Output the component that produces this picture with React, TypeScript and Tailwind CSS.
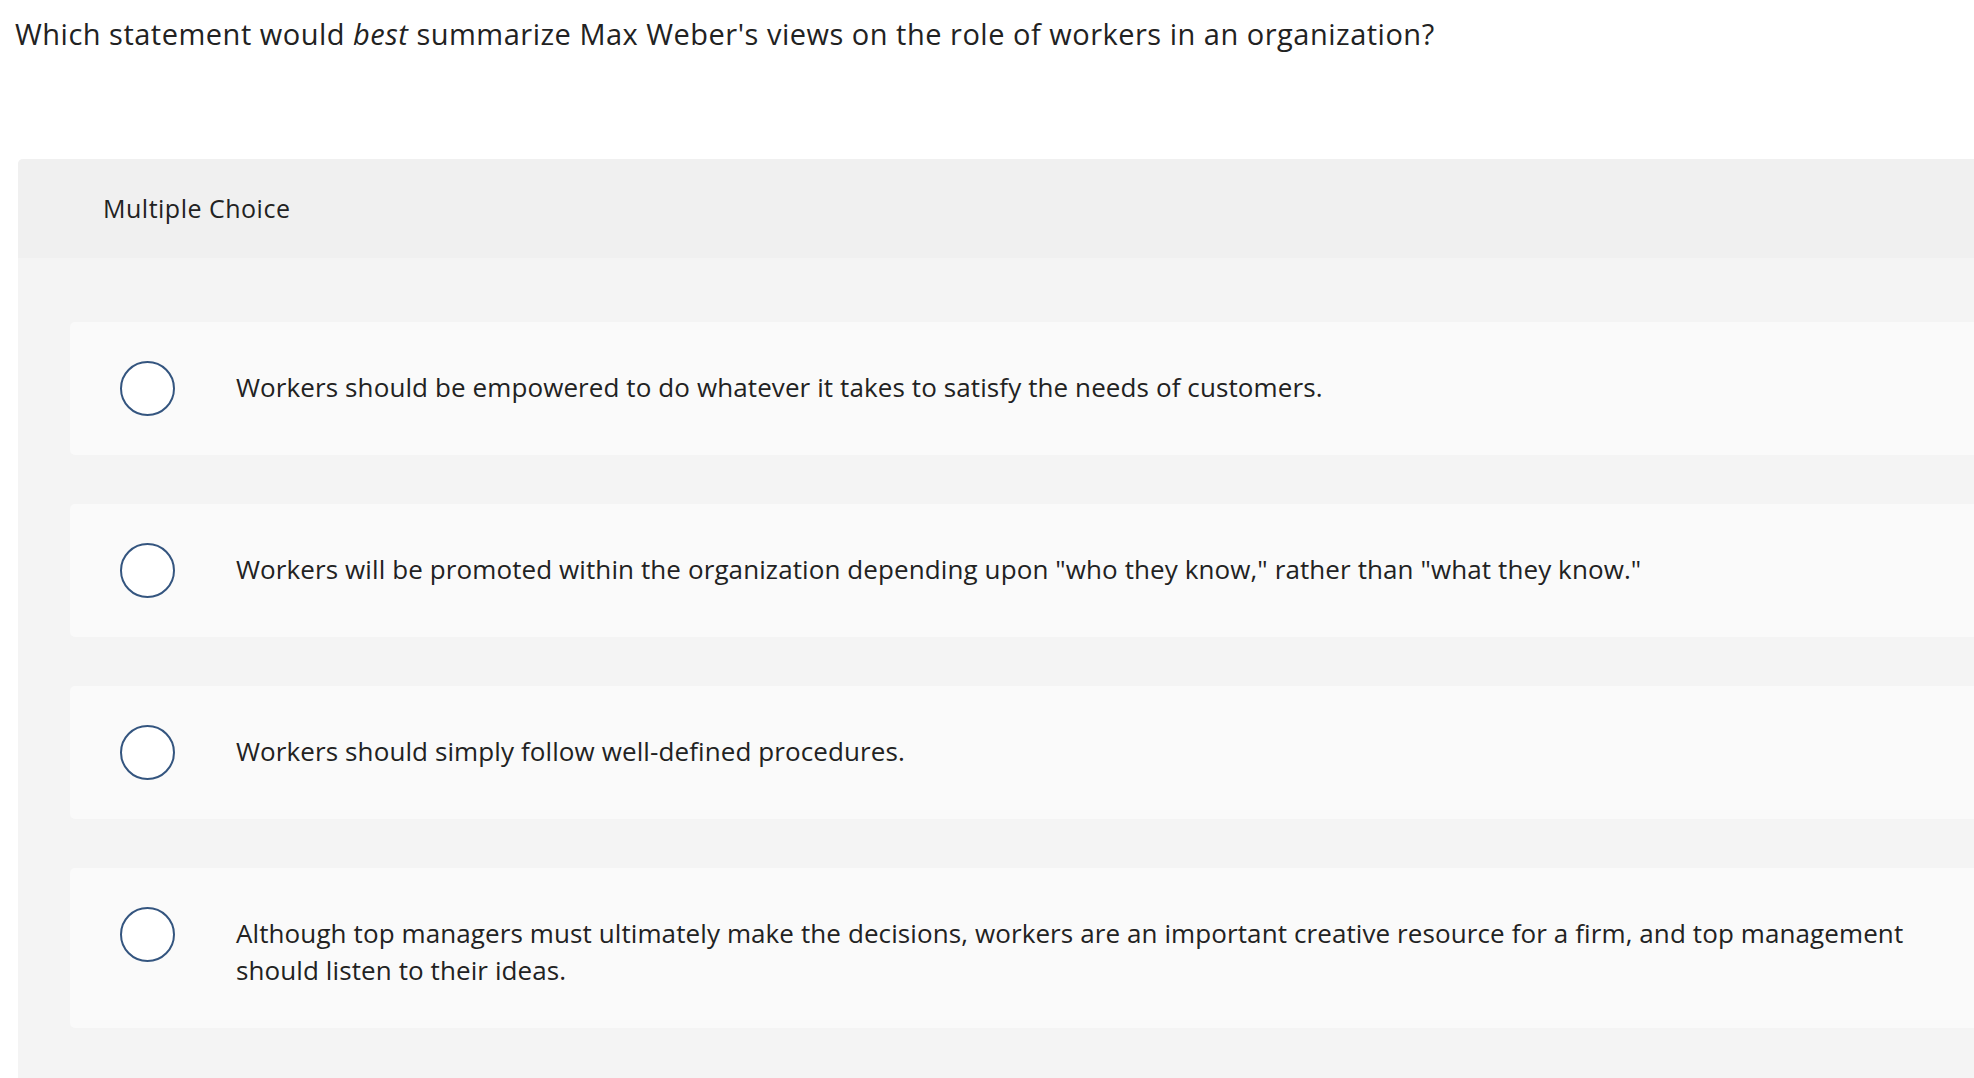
import React from 'react';

const options = [
  'Workers should be empowered to do whatever it takes to satisfy the needs of customers.',
  'Workers will be promoted within the organization depending upon "who they know," rather than "what they know."',
  'Workers should simply follow well-defined procedures.',
  'Although top managers must ultimately make the decisions, workers are an important creative resource for a firm, and top management should listen to their ideas.',
];

function Radio() {
  return (
    <span className="block w-[55px] h-[55px] shrink-0 rounded-full border-2 border-[#34557f] bg-white" />
  );
}

export default function App() {
  return (
    <div className="h-[1078px] w-full overflow-hidden bg-white text-[#222] font-['Open_Sans',_'Lato',_sans-serif]">
      <h1 className="pl-[15px] pt-[16px] text-[29px] leading-[36px] tracking-[0.5px] font-normal">
        Which statement would <em>best</em> summarize Max Weber's views on the role of workers in an organization?
      </h1>

      <div className="ml-[18px] mt-[107px] rounded-tl-[5px] bg-[#f4f4f4] overflow-hidden">
        <div className="h-[99px] bg-[#f0f0f0] pl-[85px] flex items-center">
          <span className="text-[25px] tracking-[0.5px]">Multiple Choice</span>
        </div>

        <div className="pl-[52px] pt-[64px] pb-[60px] flex flex-col gap-[49px]">
          {options.map((text, i) => (
            <label key={i} className="flex items-start gap-[61px] rounded-l-[5px] bg-[#fafafa] pl-[50px] py-[39px] cursor-pointer">
              <Radio />
              <span className="mt-[8px] w-[1700px] text-[26px] leading-[37px] tracking-[0.1px]">{text}</span>
            </label>
          ))}
        </div>
      </div>
    </div>
  );
}
